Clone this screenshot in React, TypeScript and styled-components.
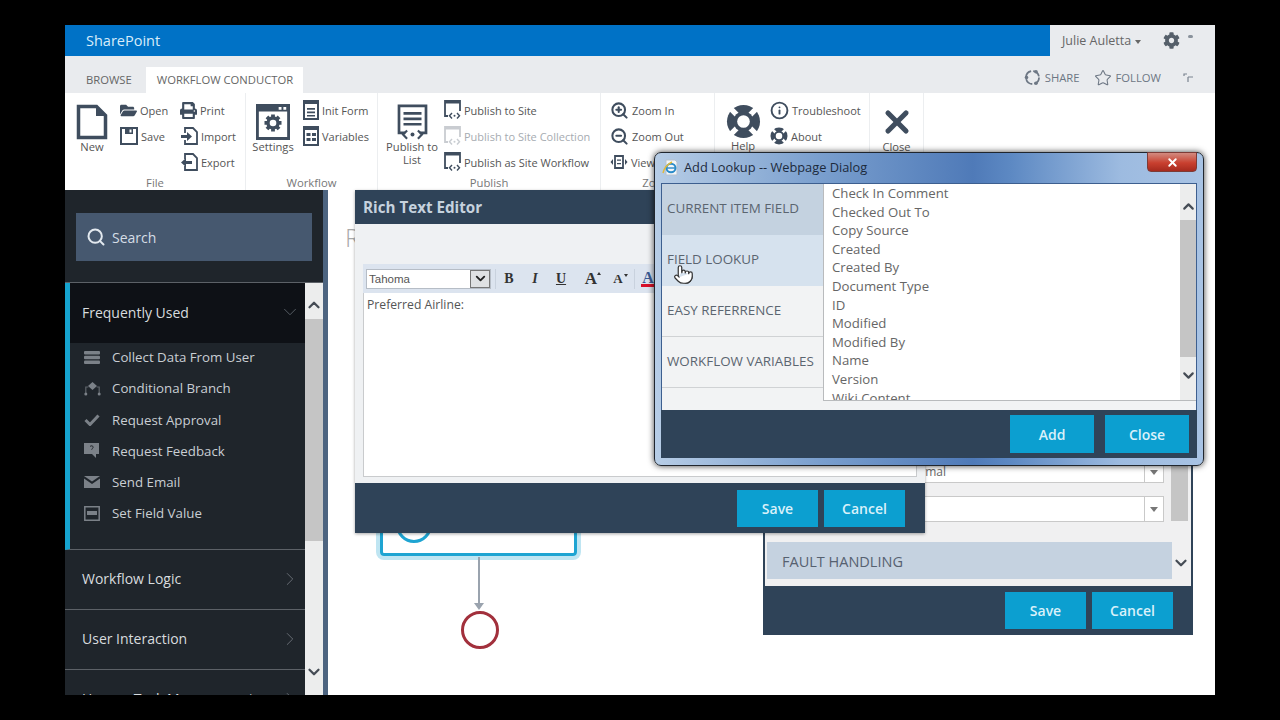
import React from "react";
import styled, { createGlobalStyle } from "styled-components";
import {
  ChevronDown,
  ChevronRight,
  ChevronUp,
  Info,
  Pointer,
  Search,
  Star,
  X,
  ZoomIn,
  ZoomOut,
} from "lucide-react";
import { FaCog, FaFolderOpen, FaPrint } from "react-icons/fa";

const SLATE = "#3f4d5e";
const FONT = `"Open Sans", "Noto Sans", sans-serif`;

const GlobalStyle = createGlobalStyle`
  html, body {
    margin: 0;
    padding: 0;
    background: #000;
    font-family: ${FONT};
  }
  * { box-sizing: border-box; }
`;

/* ---------- hand drawn ribbon icons ---------- */

const NewIcon = () => (
  <svg width="32" height="36" viewBox="0 0 32 36">
    <path d="M2.5 2.5h18l9 9v22h-27z" fill="none" stroke={SLATE} strokeWidth="3.5" />
    <path d="M20 2v10h10z" fill={SLATE} />
  </svg>
);

const SaveIcon = () => (
  <svg width="18" height="18" viewBox="0 0 18 18">
    <path d="M1 1h16v16H1z" fill="none" stroke={SLATE} strokeWidth="2" />
    <path d="M5 1h8v6H5z" fill={SLATE} />
    <path d="M9.5 2.5h2v3h-2z" fill="#fff" />
  </svg>
);

const DocArrowIcon = ({ flip }: { flip?: boolean }) => (
  <svg width="18" height="18" viewBox="0 0 18 18">
    <path d="M5 6V1h8l4 4v12H5v-4" fill="none" stroke={SLATE} strokeWidth="1.8" />
    {flip ? (
      <path d="M12 8H6V5L1 9.5 6 14v-3h6z" fill={SLATE} />
    ) : (
      <path d="M1 8h6V5l5 4.5L7 14v-3H1z" fill={SLATE} />
    )}
  </svg>
);

const SettingsIcon = () => (
  <svg width="34" height="36" viewBox="0 0 36 38">
    <path d="M1.5 1.5h33v35h-33z" fill="none" stroke={SLATE} strokeWidth="3" />
    <path d="M1 1h34v7H1z" fill={SLATE} />
    <path d="M24 3h3v3h-3zM29 3h3v3h-3z" fill="#fff" />
    <g stroke={SLATE} strokeWidth="4">
      <path d="M18 11v18M9 20h18M11.600 13.600l12.800 12.800M24.400 13.600 11.600 26.400" />
    </g>
    <circle cx="18" cy="20" r="7" fill={SLATE} />
    <circle cx="18" cy="20" r="3.500" fill="#fff" />
  </svg>
);

const WindowLinesIcon = () => (
  <svg width="16" height="20" viewBox="0 0 16 20">
    <path d="M1 1h14v18H1z" fill="none" stroke={SLATE} strokeWidth="2" />
    <path d="M1 1h14v3H1z" fill={SLATE} />
    <path d="M4 8h8v1.800H4zM4 11.500h8v1.800H4zM4 15h8v1.500H4z" fill={SLATE} />
  </svg>
);

const WindowTableIcon = () => (
  <svg width="16" height="20" viewBox="0 0 16 20">
    <path d="M1 1h14v18H1z" fill="none" stroke={SLATE} strokeWidth="2" />
    <path d="M1 1h14v3H1z" fill={SLATE} />
    <path d="M3.500 7h4v3h-4zM9 7h4v3H9zM3.500 12h4v3h-4zM9 12h4v3H9z" fill={SLATE} />
  </svg>
);

const PublishListIcon = () => (
  <svg width="33" height="36" viewBox="0 0 36 40">
    <path d="M10 32H3V2h30v30h-7" fill="none" stroke={SLATE} strokeWidth="3" />
    <path d="M8 9h20v3H8zM8 15h20v3H8zM8 21h20v3H8z" fill={SLATE} />
    <circle cx="18" cy="34" r="2.200" fill={SLATE} />
    <path d="M12 29.500 7.500 34l4.500 4.500M24 29.500l4.500 4.500-4.500 4.500" fill="none" stroke={SLATE} strokeWidth="2.400" />
  </svg>
);

const PublishSiteIcon = ({ muted }: { muted?: boolean }) => (
  <svg width="17" height="20" viewBox="0 0 17 20" opacity={muted ? 0.28 : 1}>
    <path d="M4 16H1V1h15v10" fill="none" stroke={SLATE} strokeWidth="1.800" />
    <path d="M1 1h15v2.500H1z" fill={SLATE} />
    <path d="M8 13l-2.500 2.800L8 18.500M13 13l2.500 2.800-2.500 2.700" fill="none" stroke={SLATE} strokeWidth="1.400" />
    <circle cx="10.500" cy="15.800" r="1" fill={SLATE} />
  </svg>
);

const ViewIcon = () => (
  <svg width="18" height="16" viewBox="0 0 18 16">
    <path d="M5 2h8v12H5z" fill="none" stroke={SLATE} strokeWidth="1.800" />
    <path d="M7 5.500h4v1.200H7zM7 9h4v1.200H7z" fill={SLATE} />
    <path d="M3 5 .5 8 3 11zM15 5l2.500 3L15 11z" fill={SLATE} />
  </svg>
);

const BuoyIcon = ({ size }: { size: number }) => (
  <svg width={size} height={size} viewBox="0 0 36 36">
    <circle cx="18" cy="18" r="17" fill={SLATE} />
    <path d="M4 4l28 28M32 4 4 32" stroke="#fff" strokeWidth="5.500" />
    <circle cx="18" cy="18" r="10.500" fill={SLATE} />
    <circle cx="18" cy="18" r="6.500" fill="#fff" />
  </svg>
);

const ShareIcon = () => (
  <svg width="17" height="17" viewBox="0 0 17 17">
    <circle cx="8.500" cy="8.500" r="6.500" fill="none" stroke="#6d7784" strokeWidth="1.800" strokeDasharray="8 2.200" />
    <circle cx="2.500" cy="8.500" r="1.800" fill="#6d7784" />
    <circle cx="12" cy="2.800" r="1.800" fill="#6d7784" />
    <circle cx="12" cy="14.200" r="1.800" fill="#6d7784" />
  </svg>
);

const FocusIcon = () => (
  <svg width="11" height="10" viewBox="0 0 11 10">
    <path d="M1 3V1h3M5 4h5M5 4v5" fill="none" stroke="#7b8490" strokeWidth="1.200" />
  </svg>
);

const BrowserIcon = () => (
  <svg width="17" height="17" viewBox="0 0 17 17">
    <path d="M4 1h9l2 2v13H4z" fill="#f4f6f8" stroke="#b7c2cf" />
    <ellipse cx="9" cy="9" rx="4.500" ry="4.300" fill="none" stroke="#2a8bc9" strokeWidth="2" />
    <path d="M5 9h8" stroke="#2a8bc9" strokeWidth="1.400" />
    <path d="M1 14c1-5 5-9 9-11" fill="none" stroke="#e0b93a" strokeWidth="1.400" />
  </svg>
);

const ListRowsIcon = () => (
  <svg width="16" height="13" viewBox="0 0 16 13">
    <rect y="0" width="16" height="3.400" rx="1" fill="#7b8188" />
    <rect y="4.800" width="16" height="3.400" rx="1" fill="#7b8188" />
    <rect y="9.600" width="16" height="3.400" rx="1" fill="#7b8188" />
  </svg>
);

const BranchIcon = () => (
  <svg width="17" height="15" viewBox="0 0 17 15">
    <path d="M8.500 1 13 5l-4.500 4L4 5z" fill="#7b8188" />
    <path d="M1.800 13V6h2.500M15.200 13V6h-2.500" fill="none" stroke="#5f656c" strokeWidth="1.200" />
    <circle cx="1.800" cy="13" r="1.500" fill="#7b8188" />
    <circle cx="15.200" cy="13" r="1.500" fill="#7b8188" />
  </svg>
);

const CheckIcon = () => (
  <svg width="16" height="12" viewBox="0 0 16 12">
    <path d="M1.500 6l4.500 4.500L14.500 1.500" fill="none" stroke="#7b8188" strokeWidth="3" />
  </svg>
);

const FeedbackIcon = () => (
  <svg width="15" height="15" viewBox="0 0 15 15">
    <path d="M0 0h15v11h-3v4l-4-4H0z" fill="#7b8188" />
    <path d="M6 3.500c1-1.200 3.200-.8 3.200.7 0 1.200-1.500 1.200-1.500 2.500" fill="none" stroke="#22272d" strokeWidth="1" />
  </svg>
);

const MailIcon = () => (
  <svg width="16" height="12" viewBox="0 0 16 12">
    <path d="M0 0h16L8 5.500z" fill="#7b8188" />
    <path d="M0 2.500 8 8l8-5.500V12H0z" fill="#7b8188" />
  </svg>
);

const FieldIcon = () => (
  <svg width="16" height="15" viewBox="0 0 16 15">
    <path d="M.8.800h14.400v13.400H.8z" fill="none" stroke="#7b8188" strokeWidth="1.500" />
    <path d="M3 5h10v4H3z" fill="#7b8188" />
  </svg>
);

/* ---------- frame ---------- */

const Frame = styled.div`
  position: relative;
  width: 1150px;
  height: 670px;
  margin: 25px 65px;
  background: #fff;
  overflow: hidden;
  color: #555;
`;

const TopBar = styled.header`
  display: flex;
  height: 31px;
`;

const Brand = styled.div`
  flex: 1;
  background: #0072c6;
  color: #d8ecfa;
  font-size: 14.500px;
  line-height: 31px;
  padding-left: 21px;
`;

const UserArea = styled.div`
  width: 165px;
  background: #e9ebee;
  display: flex;
  align-items: center;
  padding-left: 12px;
  font-size: 12.500px;
  color: #666;
`;

const Caret = styled.span`
  width: 0;
  height: 0;
  margin: 2px 0 0 4px;
  border: 3.500px solid transparent;
  border-top: 4px solid #666;
  border-bottom: 0;
`;

const GearWrap = styled.span`
  display: flex;
  margin-left: 22px;
  color: #555f6a;
`;

const TinyMark = styled.span`
  width: 5px;
  height: 3px;
  margin: -8px 0 0 8px;
  background: #8a929c;
  border-radius: 2px;
`;

const TabRow = styled.nav`
  display: flex;
  align-items: flex-end;
  height: 37px;
  background: #e9ebee;
`;

const Tab = styled.div<{ $active?: boolean }>`
  height: 26px;
  padding: 0 ${(p) => (p.$active ? "10px" : "14px")} 0 ${(p) => (p.$active ? "11px" : "21px")};
  background: ${(p) => (p.$active ? "#fff" : "transparent")};
  font-size: 11.250px;
  line-height: 26px;
  color: #666;
`;

const TabActions = styled.div`
  display: flex;
  align-items: center;
  gap: 4px;
  margin-left: auto;
  height: 31px;
  font-size: 11.250px;
  color: #6d7784;
`;

const ActionGap = styled.span<{ $w: number }>`
  width: ${(p) => p.$w}px;
`;

/* ---------- ribbon ---------- */

const Ribbon = styled.section`
  display: flex;
  height: 97px;
  background: #fff;
`;

const RibbonGroup = styled.div<{ $w: number }>`
  width: ${(p) => p.$w}px;
  display: flex;
  flex-direction: column;
  border-right: 1px solid #eceef0;
`;

const GroupBody = styled.div<{ $pad: number; $gap: number }>`
  flex: 1;
  display: flex;
  gap: ${(p) => p.$gap}px;
  padding: 4px 0 0 ${(p) => p.$pad}px;
`;

const GroupLabel = styled.div`
  height: 14px;
  font-size: 11.300px;
  line-height: 14px;
  text-align: center;
  color: #777;
`;

const LargeButton = styled.div<{ $w: number }>`
  width: ${(p) => p.$w}px;
  display: flex;
  flex-direction: column;
  align-items: center;
  padding-top: 7px;
  font-size: 11.200px;
  line-height: 12.500px;
  text-align: center;
  color: #555;
`;

const LargeLabel = styled.span`
  margin-top: 1px;
`;

const SmallColumn = styled.div<{ $w?: number }>`
  width: ${(p) => (p.$w ? `${p.$w}px` : "auto")};
  display: flex;
  flex-direction: column;
`;

const SmallItem = styled.div<{ $muted?: boolean }>`
  height: 26px;
  display: flex;
  align-items: center;
  gap: 3px;
  font-size: 11px;
  white-space: nowrap;
  color: ${(p) => (p.$muted ? "#a6abb1" : "#555")};
`;

/* ---------- workspace ---------- */

const Workspace = styled.main`
  display: flex;
  height: 505px;
`;

const Sidebar = styled.aside`
  width: 258px;
  background: #1f252b;
  display: flex;
  flex-direction: column;
`;

const SearchArea = styled.div`
  height: 93px;
  padding: 23px 11px 0;
  border-bottom: 1px solid #5c6167;
`;

const SearchBox = styled.div`
  height: 48px;
  background: #46586f;
  display: flex;
  align-items: center;
  gap: 6px;
  padding-left: 10px;
  font-size: 14px;
  color: #d5dde6;
`;

const SideBody = styled.div`
  flex: 1;
  display: flex;
  min-height: 0;
`;

const Accordion = styled.div`
  width: 240px;
  overflow: hidden;
`;

const OpenSection = styled.div`
  height: 267px;
  border-left: 5px solid #15a3cf;
  border-bottom: 1px solid #5c6167;
`;

const SectionHead = styled.div<{ $open?: boolean }>`
  height: 60px;
  display: flex;
  align-items: center;
  justify-content: space-between;
  padding: 0 4px 2px ${(p) => (p.$open ? "12px" : "17px")};
  background: ${(p) => (p.$open ? "#0e1116" : "transparent")};
  border-bottom: ${(p) => (p.$open ? "0" : "1px solid #5c6167")};
  font-size: 14px;
  color: #d8dcdf;
`;

const SideItems = styled.div`
  display: flex;
  flex-direction: column;
`;

const SideItem = styled.div`
  height: 31.250px;
  padding-bottom: 3px;
  display: flex;
  align-items: center;
  font-size: 13.300px;
  color: #c9ced3;
`;

const SideIcon = styled.span`
  width: 42px;
  padding-left: 14px;
  display: flex;
  align-items: center;
`;

const ScrollBar = styled.div<{ $w: number }>`
  width: ${(p) => p.$w}px;
  background: #eceded;
  display: flex;
  flex-direction: column;
  align-items: center;
  flex-shrink: 0;
`;

const ScrollArrow = styled.div<{ $h: number; $top?: number; $bottom?: number }>`
  height: ${(p) => p.$h}px;
  padding: ${(p) => p.$top ?? 0}px 0 ${(p) => p.$bottom ?? 0}px;
  display: flex;
  align-items: center;
  justify-content: center;
  color: #454c55;
  flex-shrink: 0;
`;

const ScrollThumb = styled.div<{ $h: number }>`
  width: 100%;
  height: ${(p) => p.$h}px;
  background: #c5c5c5;
  flex-shrink: 0;
`;

const ScrollFill = styled.div`
  flex: 1;
`;

const SideEdge = styled.div`
  width: 5px;
  background: #4d6480;
`;

const Canvas = styled.div`
  position: relative;
  flex: 1;
  background: #fff;
  padding: 30px 17px;
  font-size: 25px;
  font-weight: 300;
  color: #a9a9a9;
`;

const TaskNode = styled.div`
  position: absolute;
  left: 52px;
  top: 210px;
  width: 197px;
  height: 156px;
  border: 3px solid #1ea4d2;
  border-radius: 4px;
  box-shadow: 0 0 0 4px #bfe5f2;
`;

const NodeRing = styled.div`
  position: absolute;
  left: 13px;
  top: 104px;
  width: 36px;
  height: 36px;
  border: 3px solid #1ea4d2;
  border-radius: 50%;
`;

const Connector = styled.div`
  position: absolute;
  left: 150px;
  top: 367px;
  width: 2px;
  height: 47px;
  background: #9aa3ae;
  &::after {
    content: "";
    position: absolute;
    left: -4px;
    bottom: -6px;
    border: 5px solid transparent;
    border-top: 7px solid #9aa3ae;
    border-bottom: 0;
  }
`;

const EndNode = styled.div`
  position: absolute;
  left: 133px;
  top: 421px;
  width: 38px;
  height: 38px;
  border: 3px solid #a2303c;
  border-radius: 50%;
`;

/* ---------- floating windows ---------- */

const ActionButton = styled.button<{ $w: number; $h?: number }>`
  width: ${(p) => p.$w}px;
  height: ${(p) => p.$h ?? 37}px;
  border: 0;
  padding: 0;
  background: #0c9fd0;
  color: #d9f1fa;
  font-family: ${FONT};
  font-size: 14px;
  font-weight: 600;
`;

const PropertiesPanel = styled.section`
  position: absolute;
  left: 698px;
  top: 165px;
  width: 430px;
  height: 445px;
  background: #f0f0f1;
  border: solid #2f4358;
  border-width: 0 2px;
  display: flex;
  flex-direction: column;
  justify-content: flex-end;
`;

const PanelBody = styled.div`
  display: flex;
  flex-direction: column;
  position: relative;
  padding: 0 0 7px 2px;
`;

const SelectRow = styled.div<{ $w: number; $h: number; $gap: number }>`
  width: ${(p) => p.$w}px;
  height: ${(p) => p.$h}px;
  margin: 0 27px ${(p) => p.$gap}px auto;
  display: flex;
  background: #fff;
  border: 1px solid #c9c9c9;
  font-size: 12px;
  line-height: 20px;
  color: #666;
`;

const SelectText = styled.span`
  flex: 1;
  padding-left: 8px;
`;

const SelectArrow = styled.span`
  width: 19px;
  border-left: 1px solid #c9c9c9;
  display: flex;
  align-items: center;
  justify-content: center;
  &::after {
    content: "";
    border: 4px solid transparent;
    border-top: 5px solid #777;
    border-bottom: 0;
  }
`;

const FaultRow = styled.div`
  height: 37px;
  margin-right: 19px;
  padding-left: 15px;
  background: #c5d2e0;
  font-size: 14.500px;
  line-height: 39px;
  color: #566170;
`;

const PanelScroll = styled.div`
  position: absolute;
  right: 1px;
  bottom: 14px;
  height: 120px;
  width: 19px;
  display: flex;
  flex-direction: column;
  justify-content: flex-end;
  align-items: center;
  color: #454c55;
`;

const PanelThumb = styled.div`
  position: absolute;
  top: 0;
  left: 0;
  width: 17px;
  height: 69px;
  background: #c5c5c5;
`;

const Footer = styled.div<{ $h: number; $pad: number; $gap: number }>`
  height: ${(p) => p.$h}px;
  flex-shrink: 0;
  background: #2f4358;
  display: flex;
  justify-content: flex-end;
  align-items: center;
  gap: ${(p) => p.$gap}px;
  padding-right: ${(p) => p.$pad}px;
`;

const EditorWindow = styled.section`
  position: absolute;
  left: 290px;
  top: 165px;
  width: 570px;
  height: 343px;
  background: #eff1f3;
  display: flex;
  flex-direction: column;
  box-shadow: 0 1px 3px rgba(0, 0, 0, 0.35);
`;

const EditorHeader = styled.h2`
  margin: 0;
  height: 34px;
  background: #2f4358;
  padding-left: 8px;
  font-size: 15.200px;
  font-weight: 700;
  line-height: 34px;
  color: #c6d2de;
`;

const EditorBody = styled.div`
  flex: 1;
  padding: 40px 8px 6px;
  display: flex;
  flex-direction: column;
  min-height: 0;
`;

const EditorToolbar = styled.div`
  height: 29px;
  background: #dce4ef;
  display: flex;
  align-items: center;
  padding-left: 3px;
  font-family: "Liberation Serif", serif;
  color: #333;
`;

const FontSelect = styled.div`
  width: 125px;
  height: 20px;
  background: #fff;
  border: 1px solid #b6bdc6;
  display: flex;
  font-family: "Liberation Sans", sans-serif;
  font-size: 11.500px;
  line-height: 18px;
  color: #555;
  padding-left: 2px;
  justify-content: space-between;
`;

const SelectBtn = styled.span`
  width: 20px;
  background: #dfe1e3;
  border: 1px solid #777;
  display: flex;
  align-items: center;
  justify-content: center;
  color: #222;
`;

const ToolGlyph = styled.span<{ $w: number; $size?: number; $italic?: boolean; $under?: boolean }>`
  width: ${(p) => p.$w}px;
  text-align: center;
  font-size: ${(p) => p.$size ?? 14}px;
  font-weight: 700;
  font-style: ${(p) => (p.$italic ? "italic" : "normal")};
  text-decoration: ${(p) => (p.$under ? "underline" : "none")};
`;

const SizeGlyph = styled(ToolGlyph)<{ $down?: boolean }>`
  position: relative;
  &::after {
    content: "";
    position: absolute;
    top: 3px;
    right: ${(p) => (p.$down ? "0" : "7px")};
    border: 2.500px solid transparent;
    border-bottom: ${(p) => (p.$down ? "0" : "3px solid #333")};
    border-top: ${(p) => (p.$down ? "3px solid #333" : "0")};
  }
`;

const ColorGlyph = styled(ToolGlyph)`
  border-bottom: 3px solid #d8112a;
  line-height: 13px;
  color: #3c5b94;
`;

const ToolDivider = styled.span<{ $before: number; $after: number }>`
  width: 1px;
  height: 20px;
  margin: 0 ${(p) => p.$after}px 0 ${(p) => p.$before}px;
  background: #c9d2de;
`;

const EditorArea = styled.div`
  flex: 1;
  background: #fff;
  border: 1px solid #c9cbcd;
  border-top: 0;
  padding: 3px 3px;
  font-size: 12.200px;
  color: #555;
`;

const LookupDialog = styled.section`
  position: absolute;
  left: 589px;
  top: 127px;
  width: 550px;
  height: 314px;
  padding: 0 6px 7px;
  border: 1px solid #20262e;
  border-radius: 7px;
  background: linear-gradient(90deg, #b7cde6 0%, #7a9fce 30%, #4f7ab8 58%, #5d89c3 65%, #9dbbe0 85%, #a8c3e4 100%);
  box-shadow: 0 0 6px rgba(0, 0, 0, 0.75);
  display: flex;
  flex-direction: column;
`;

const DialogTitleBar = styled.div`
  position: relative;
  height: 30px;
  flex-shrink: 0;
  display: flex;
  align-items: center;
  gap: 5px;
  padding: 0 0 2px 1px;
  font-size: 12.800px;
  color: #1c2a3c;
`;

const DialogClose = styled.div`
  position: absolute;
  top: -1px;
  right: 0;
  width: 50px;
  height: 20px;
  border-radius: 0 0 4px 4px;
  background: linear-gradient(180deg, #d28b80 0%, #c9402f 55%, #a62a1e 100%);
  border: 1px solid #7d3b36;
  display: flex;
  align-items: center;
  justify-content: center;
  color: #fff;
`;

const DialogContent = styled.div`
  flex: 1;
  display: flex;
  background: #f2f3f4;
  border: 1px solid #3d5f8f;
  border-bottom: 0;
  min-height: 0;
`;

const LookupNav = styled.ul`
  width: 161px;
  margin: 0;
  padding: 0;
  list-style: none;
`;

const LookupNavItem = styled.li<{ $bg: string }>`
  height: 51px;
  padding-left: 5px;
  background: ${(p) => p.$bg};
  border-bottom: 1px solid ${(p) => (p.$bg === "#f2f3f4" ? "#d0d2d4" : "transparent")};
  font-size: 13.400px;
  line-height: 48px;
  color: #5b6570;
  white-space: nowrap;
`;

const LookupList = styled.div`
  flex: 1;
  display: flex;
  height: 217px;
  background: #fff;
  border: solid #b9bbbd;
  border-width: 0 0 1px 1px;
  overflow: hidden;
`;

const LookupRows = styled.div`
  flex: 1;
  padding: 0 0 0 8px;
  font-size: 13.200px;
  line-height: 18.600px;
  color: #666;
`;

const HandCursor = styled.div`
  position: absolute;
  left: 18px;
  top: 111px;
  display: flex;
`;

const sidebarItems = [
  { icon: <ListRowsIcon />, label: "Collect Data From User" },
  { icon: <BranchIcon />, label: "Conditional Branch" },
  { icon: <CheckIcon />, label: "Request Approval" },
  { icon: <FeedbackIcon />, label: "Request Feedback" },
  { icon: <MailIcon />, label: "Send Email" },
  { icon: <FieldIcon />, label: "Set Field Value" },
];

const lookupFields = [
  "Check In Comment",
  "Checked Out To",
  "Copy Source",
  "Created",
  "Created By",
  "Document Type",
  "ID",
  "Modified",
  "Modified By",
  "Name",
  "Version",
  "Wiki Content",
];

const App = () => {
  return (
    <>
      <GlobalStyle />
      <Frame>
        <TopBar>
          <Brand>SharePoint</Brand>
          <UserArea>
            Julie Auletta
            <Caret />
            <GearWrap>
              <FaCog size={17} />
            </GearWrap>
            <TinyMark />
          </UserArea>
        </TopBar>

        <TabRow>
          <Tab>BROWSE</Tab>
          <Tab $active>WORKFLOW CONDUCTOR</Tab>
          <TabActions>
            <ShareIcon />
            SHARE
            <ActionGap $w={6} />
            <Star size={18} strokeWidth={1.4} />
            FOLLOW
            <ActionGap $w={14} />
            <FocusIcon />
            <ActionGap $w={17} />
          </TabActions>
        </TabRow>

        <Ribbon>
          <RibbonGroup $w={181}>
            <GroupBody $pad={2} $gap={3}>
              <LargeButton $w={50}>
                <NewIcon />
                <LargeLabel>New</LargeLabel>
              </LargeButton>
              <SmallColumn $w={57}>
                <SmallItem>
                  <FaFolderOpen size={17} color={SLATE} />
                  Open
                </SmallItem>
                <SmallItem>
                  <SaveIcon />
                  Save
                </SmallItem>
              </SmallColumn>
              <SmallColumn>
                <SmallItem>
                  <FaPrint size={17} color={SLATE} />
                  Print
                </SmallItem>
                <SmallItem>
                  <DocArrowIcon />
                  Import
                </SmallItem>
                <SmallItem>
                  <DocArrowIcon flip />
                  Export
                </SmallItem>
              </SmallColumn>
            </GroupBody>
            <GroupLabel>File</GroupLabel>
          </RibbonGroup>

          <RibbonGroup $w={132}>
            <GroupBody $pad={0} $gap={3}>
              <LargeButton $w={54}>
                <SettingsIcon />
                <LargeLabel>Settings</LargeLabel>
              </LargeButton>
              <SmallColumn>
                <SmallItem>
                  <WindowLinesIcon />
                  Init Form
                </SmallItem>
                <SmallItem>
                  <WindowTableIcon />
                  Variables
                </SmallItem>
              </SmallColumn>
            </GroupBody>
            <GroupLabel>Workflow</GroupLabel>
          </RibbonGroup>

          <RibbonGroup $w={223}>
            <GroupBody $pad={6} $gap={4}>
              <LargeButton $w={56}>
                <PublishListIcon />
                <LargeLabel>
                  Publish to
                  <br />
                  List
                </LargeLabel>
              </LargeButton>
              <SmallColumn>
                <SmallItem>
                  <PublishSiteIcon />
                  Publish to Site
                </SmallItem>
                <SmallItem $muted>
                  <PublishSiteIcon muted />
                  Publish to Site Collection
                </SmallItem>
                <SmallItem>
                  <PublishSiteIcon />
                  Publish as Site Workflow
                </SmallItem>
              </SmallColumn>
            </GroupBody>
            <GroupLabel>Publish</GroupLabel>
          </RibbonGroup>

          <RibbonGroup $w={114}>
            <GroupBody $pad={9} $gap={0}>
              <SmallColumn>
                <SmallItem>
                  <ZoomIn size={19} color={SLATE} strokeWidth={2.6} />
                  Zoom In
                </SmallItem>
                <SmallItem>
                  <ZoomOut size={19} color={SLATE} strokeWidth={2.6} />
                  Zoom Out
                </SmallItem>
                <SmallItem>
                  <ViewIcon />
                  View
                </SmallItem>
              </SmallColumn>
            </GroupBody>
            <GroupLabel>Zoom</GroupLabel>
          </RibbonGroup>

          <RibbonGroup $w={155}>
            <GroupBody $pad={5} $gap={4}>
              <LargeButton $w={46}>
                <BuoyIcon size={35} />
                <LargeLabel>Help</LargeLabel>
              </LargeButton>
              <SmallColumn>
                <SmallItem>
                  <Info size={19} color={SLATE} strokeWidth={2.4} />
                  Troubleshoot
                </SmallItem>
                <SmallItem>
                  <BuoyIcon size={18} />
                  About
                </SmallItem>
              </SmallColumn>
            </GroupBody>
            <GroupLabel />
          </RibbonGroup>

          <RibbonGroup $w={54}>
            <GroupBody $pad={0} $gap={0}>
              <LargeButton $w={54}>
                <X size={36} color={SLATE} strokeWidth={3.4} />
                <LargeLabel>Close</LargeLabel>
              </LargeButton>
            </GroupBody>
            <GroupLabel />
          </RibbonGroup>
        </Ribbon>

        <Workspace>
          <Sidebar>
            <SearchArea>
              <SearchBox>
                <Search size={20} strokeWidth={2.4} color="#e3e9ef" />
                Search
              </SearchBox>
            </SearchArea>
            <SideBody>
              <Accordion>
                <OpenSection>
                  <SectionHead $open>
                    Frequently Used
                    <ChevronDown size={22} strokeWidth={1} color="#5b6168" />
                  </SectionHead>
                  <SideItems>
                    {sidebarItems.map((item) => (
                      <SideItem key={item.label}>
                        <SideIcon>{item.icon}</SideIcon>
                        {item.label}
                      </SideItem>
                    ))}
                  </SideItems>
                </OpenSection>
                <SectionHead>
                  Workflow Logic
                  <ChevronRight size={22} strokeWidth={1} color="#6a7077" />
                </SectionHead>
                <SectionHead>
                  User Interaction
                  <ChevronRight size={22} strokeWidth={1} color="#6a7077" />
                </SectionHead>
                <SectionHead>
                  Human Task Management
                  <ChevronRight size={22} strokeWidth={1} color="#6a7077" />
                </SectionHead>
              </Accordion>
              <ScrollBar $w={18}>
                <ScrollArrow $h={36} $top={8}>
                  <ChevronUp size={18} strokeWidth={3} />
                </ScrollArrow>
                <ScrollThumb $h={222} />
                <ScrollFill />
                <ScrollArrow $h={46}>
                  <ChevronDown size={18} strokeWidth={3} />
                </ScrollArrow>
              </ScrollBar>
            </SideBody>
          </Sidebar>
          <SideEdge />
          <Canvas>
            Request Form
            <TaskNode>
              <NodeRing />
            </TaskNode>
            <Connector />
            <EndNode />
          </Canvas>
        </Workspace>

        <PropertiesPanel>
          <PanelBody>
            <SelectRow $w={269} $h={22} $gap={13}>
              <SelectText>Normal</SelectText>
              <SelectArrow />
            </SelectRow>
            <SelectRow $w={269} $h={26} $gap={20}>
              <SelectText />
              <SelectArrow />
            </SelectRow>
            <FaultRow>FAULT HANDLING</FaultRow>
            <PanelScroll>
              <PanelThumb />
              <ChevronDown size={18} strokeWidth={3} />
            </PanelScroll>
          </PanelBody>
          <Footer $h={49} $pad={18} $gap={6}>
            <ActionButton $w={81}>Save</ActionButton>
            <ActionButton $w={81}>Cancel</ActionButton>
          </Footer>
        </PropertiesPanel>

        <EditorWindow>
          <EditorHeader>Rich Text Editor</EditorHeader>
          <EditorBody>
            <EditorToolbar>
              <FontSelect>
                Tahoma
                <SelectBtn>
                  <ChevronDown size={15} strokeWidth={3} />
                </SelectBtn>
              </FontSelect>
              <ToolDivider $before={4} $after={0} />
              <ToolGlyph $w={26} $size={14}>
                B
              </ToolGlyph>
              <ToolGlyph $w={26} $italic>
                I
              </ToolGlyph>
              <ToolGlyph $w={26} $under>
                U
              </ToolGlyph>
              <SizeGlyph $w={34} $size={17}>
                A
              </SizeGlyph>
              <SizeGlyph $w={20} $size={13} $down>
                A
              </SizeGlyph>
              <ToolDivider $before={6} $after={6} />
              <ColorGlyph $w={14} $size={16}>
                A
              </ColorGlyph>
            </EditorToolbar>
            <EditorArea>Preferred Airline:</EditorArea>
          </EditorBody>
          <Footer $h={50} $pad={20} $gap={6}>
            <ActionButton $w={81}>Save</ActionButton>
            <ActionButton $w={81}>Cancel</ActionButton>
          </Footer>
        </EditorWindow>

        <LookupDialog>
          <DialogTitleBar>
            <BrowserIcon />
            Add Lookup -- Webpage Dialog
            <DialogClose>
              <X size={13} strokeWidth={3.5} />
            </DialogClose>
          </DialogTitleBar>
          <DialogContent>
            <LookupNav>
              <LookupNavItem $bg="#c4d2e0">CURRENT ITEM FIELD</LookupNavItem>
              <LookupNavItem $bg="#d6e2ee">FIELD LOOKUP</LookupNavItem>
              <LookupNavItem $bg="#f2f3f4">EASY REFERRENCE</LookupNavItem>
              <LookupNavItem $bg="#f2f3f4">WORKFLOW VARIABLES</LookupNavItem>
            </LookupNav>
            <LookupList>
              <LookupRows>
                {lookupFields.map((field) => (
                  <div key={field}>{field}</div>
                ))}
              </LookupRows>
              <ScrollBar $w={16}>
                <ScrollArrow $h={36} $top={8}>
                  <ChevronUp size={17} strokeWidth={3} />
                </ScrollArrow>
                <ScrollThumb $h={137} />
                <ScrollFill />
                <ScrollArrow $h={43} $bottom={7}>
                  <ChevronDown size={17} strokeWidth={3} />
                </ScrollArrow>
              </ScrollBar>
            </LookupList>
          </DialogContent>
          <Footer $h={48} $pad={8} $gap={11}>
            <ActionButton $w={84} $h={38}>
              Add
            </ActionButton>
            <ActionButton $w={84} $h={38}>
              Close
            </ActionButton>
          </Footer>
          <HandCursor>
            <Pointer size={21} fill="#fff" color="#333" strokeWidth={1.4} />
          </HandCursor>
        </LookupDialog>
      </Frame>
    </>
  );
};

export default App;
